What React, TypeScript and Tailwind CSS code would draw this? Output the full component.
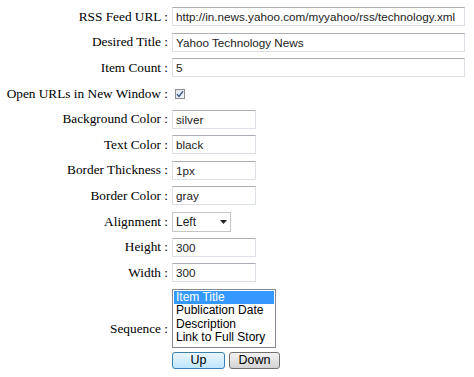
const label = "text-right pr-[4px] text-[13.3px] text-black whitespace-nowrap";
const field =
  "h-[19px] border border-[#dbdfe6] border-t-[#abadb3] bg-white px-[3px] text-[11.7px] leading-[17px] text-[#222] font-['Liberation_Sans',Arial,sans-serif] outline-none";

const rows: { name: string; value: string }[] = [
  { name: "RSS Feed URL :", value: "http://in.news.yahoo.com/myyahoo/rss/technology.xml" },
  { name: "Desired Title :", value: "Yahoo Technology News" },
  { name: "Item Count :", value: "5" },
];

const small = [
  { name: "Background Color :", value: "silver" },
  { name: "Text Color :", value: "black" },
  { name: "Border Thickness :", value: "1px" },
  { name: "Border Color :", value: "gray" },
];

const sequence = ["Item Title", "Publication Date", "Description", "Link to Full Story"];

const Row = ({ name, children }: { name: string; children: React.ReactNode }) => (
  <>
    <div className={`${label} h-[25.6px] flex items-center justify-end`}>{name}</div>
    <div className="h-[25.6px] flex items-center">{children}</div>
  </>
);

export default function App() {
  return (
    <div className="w-[474px] h-[377px] bg-white overflow-hidden font-['Liberation_Serif','Times_New_Roman',serif]">
      <div className="grid grid-cols-[172px_1fr] pt-[4px]">
        {rows.map((r) => (
          <Row key={r.name} name={r.name}>
            <div className={`${field} w-[293px]`}>{r.value}</div>
          </Row>
        ))}

        <Row name="Open URLs in New Window :">
          <span className="ml-[3px] w-[10px] h-[10px] border border-[#8f8f8f] bg-gradient-to-br from-[#dfe6ee] to-[#f4f6f9] flex items-center justify-center">
            <svg width="8" height="8" viewBox="0 0 8 8">
              <path d="M1 4.2 L3 6.4 L7 1.2" fill="none" stroke="#3b5a8a" strokeWidth="1.4" />
            </svg>
          </span>
        </Row>

        {small.map((r) => (
          <Row key={r.name} name={r.name}>
            <div className={`${field} w-[84px]`}>{r.value}</div>
          </Row>
        ))}

        <Row name="Alignment :">
          <div className="h-[20px] w-[59px] border border-[#c5c5c5] bg-white flex items-center justify-between pl-[3px] pr-[3px] text-[12px] text-[#222] font-['Liberation_Sans',Arial,sans-serif]">
            <span>Left</span>
            <svg width="7" height="4" viewBox="0 0 7 4">
              <path d="M0 0 H7 L3.5 4 Z" fill="#222" />
            </svg>
          </div>
        </Row>

        <Row name="Height :">
          <div className={`${field} w-[84px]`}>300</div>
        </Row>
        <Row name="Width :">
          <div className={`${field} w-[84px]`}>300</div>
        </Row>

        <div className={`${label} flex items-center justify-end pt-[4px]`}>Sequence :</div>
        <div className="pt-[3px] flex flex-col items-start">
          <div className="w-[104px] h-[59px] border border-[#828790] bg-white p-[1px] font-['Liberation_Sans',Arial,sans-serif] text-[12px] leading-[13.6px] text-black">
            {sequence.map((s, i) => (
              <div key={s} className={i === 0 ? "bg-[#3399ff] text-white px-[2px]" : "px-[2px]"}>
                {s}
              </div>
            ))}
          </div>
          <div className="flex gap-[4px] mt-[4px] font-['Liberation_Sans',Arial,sans-serif] text-[12.5px] text-black">
            <button className="w-[53px] h-[17px] rounded-[3px] border border-[#3c7fb1] bg-gradient-to-b from-[#eaf6fd] to-[#bee6fd] leading-[15px]">
              Up
            </button>
            <button className="w-[51px] h-[17px] rounded-[3px] border border-[#707070] bg-gradient-to-b from-[#f2f2f2] to-[#d4d4d4] leading-[15px]">
              Down
            </button>
          </div>
        </div>
      </div>
    </div>
  );
}
